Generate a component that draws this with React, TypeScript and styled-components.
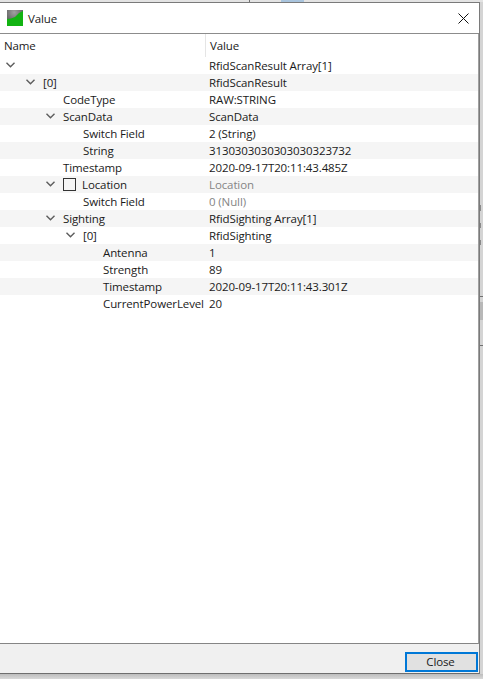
import React from 'react';
import styled, { createGlobalStyle } from 'styled-components';

const GlobalStyle = createGlobalStyle`
  html, body {
    margin: 0;
    padding: 0;
    overflow: hidden;
    background: #dcdcdc;
  }
`;

const Page = styled.div`
  width: 483px;
  height: 679px;
  display: grid;
  grid-template-columns: 480px 3px;
  grid-template-rows: 2px 672px 5px;
  font-family: 'Open Sans', 'Liberation Sans', sans-serif;
  font-size: 11.5px;
  letter-spacing: -0.11px;
  color: #1a1a1a;
  overflow: hidden;
`;

const TopStrip = styled.div`
  grid-column: 1 / 3;
  display: flex;
  background: #e3e3e3;
`;

const StripLine = styled.div`
  width: 1px;
  margin-left: 249px;
  background: #707070;
`;

const StripTab = styled.div`
  width: 23px;
  margin-left: 31px;
  background: #a9c4dd;
`;

const SideStrip = styled.div`
  background:
    linear-gradient(
        to bottom,
        transparent 203px,
        #8a8a8a 203px,
        #8a8a8a 209px,
        transparent 209px,
        transparent 221px,
        #8a8a8a 221px,
        #8a8a8a 226px,
        transparent 226px,
        transparent 238px,
        #8a8a8a 238px,
        #8a8a8a 243px,
        transparent 243px
      )
      left top / 1px 100% no-repeat,
    linear-gradient(
      to bottom,
      #d4d4d4 294px,
      #707070 294px,
      #707070 295px,
      #d4d4d4 295px,
      #d4d4d4 300px,
      #b8b8b8 300px,
      #b8b8b8 318px,
      #d4d4d4 318px,
      #d4d4d4 343px,
      #707070 343px,
      #707070 344px,
      #d4d4d4 344px
    );
`;

const BottomStrip = styled.div`
  grid-column: 1 / 3;
  background: linear-gradient(to bottom, #bdbdbd, #d8d8d8);
`;

const Window = styled.div`
  display: flex;
  flex-direction: column;
  min-height: 0;
  background: #fff;
  border-top: 1px solid #7a7a7a;
  border-right: 1px solid #7a7a7a;
  border-bottom: 1px solid #6e6e6e;
`;

const TitleBar = styled.div`
  height: 30px;
  flex: none;
  display: flex;
  align-items: center;
  padding: 0 10px 0 7px;
  border-bottom: 1px solid #8c8c8c;
`;

const TitleText = styled.span`
  flex: 1;
  margin-left: 5px;
`;

const CloseGlyph = styled.svg`
  width: 11px;
  height: 11px;
  display: block;
`;

const ListPane = styled.div`
  flex: 1;
  min-height: 0;
  border-right: 1px solid #a0a0a0;
  border-bottom: 1px solid #858585;
`;

const HeaderRow = styled.div`
  height: 23px;
  display: grid;
  grid-template-columns: 205px 1fr;
  align-items: center;
`;

const HeaderCell = styled.div<{ $divided?: boolean }>`
  height: 100%;
  display: flex;
  align-items: center;
  padding-left: 4px;
  box-sizing: border-box;
  border-left: ${(p) => (p.$divided ? '1px solid #e5e5e5' : 'none')};
`;

const Row = styled.div`
  height: 17px;
  display: grid;
  grid-template-columns: 209px 1fr;
  align-items: center;
  white-space: nowrap;

  &:nth-child(even) {
    background: #f5f5f5;
  }
`;

const NameCell = styled.div<{ $depth: number }>`
  display: flex;
  align-items: center;
  padding-left: ${(p) => p.$depth * 20 + 3}px;
`;

const Twisty = styled.span`
  width: 14px;
  margin-right: 6px;
  flex: none;
  display: flex;
  justify-content: center;
`;

const Chevron = styled.svg`
  width: 9px;
  height: 6px;
  display: block;
  margin-top: -2px;
`;

const CheckBox = styled.span`
  width: 11px;
  height: 11px;
  margin-right: 6px;
  border: 1px solid #333;
  flex: none;
`;

const ValueCell = styled.div<{ $muted?: boolean }>`
  color: ${(p) => (p.$muted ? '#858585' : 'inherit')};
`;

const Footer = styled.div`
  height: 29px;
  flex: none;
  display: flex;
  justify-content: flex-end;
  align-items: flex-end;
  padding: 0 1px 1px 0;
  box-sizing: border-box;
  background: #f0f0f0;
`;

const CloseButton = styled.button`
  width: 73px;
  height: 20px;
  padding: 0 2px 2px 0;
  border: 2px solid #0078d7;
  background: #e1e1e1;
  font: inherit;
  letter-spacing: inherit;
  color: inherit;
`;

type Item = {
  depth: number;
  name: string;
  value: string;
  open?: boolean;
  check?: boolean;
  muted?: boolean;
};

const items: Item[] = [
  { depth: 0, name: '', value: 'RfidScanResult Array[1]', open: true },
  { depth: 1, name: '[0]', value: 'RfidScanResult', open: true },
  { depth: 2, name: 'CodeType', value: 'RAW:STRING' },
  { depth: 2, name: 'ScanData', value: 'ScanData', open: true },
  { depth: 3, name: 'Switch Field', value: '2 (String)' },
  { depth: 3, name: 'String', value: '3130303030303030323732' },
  { depth: 2, name: 'Timestamp', value: '2020-09-17T20:11:43.485Z' },
  { depth: 2, name: 'Location', value: 'Location', open: true, check: true, muted: true },
  { depth: 3, name: 'Switch Field', value: '0 (Null)', muted: true },
  { depth: 2, name: 'Sighting', value: 'RfidSighting Array[1]', open: true },
  { depth: 3, name: '[0]', value: 'RfidSighting', open: true },
  { depth: 4, name: 'Antenna', value: '1' },
  { depth: 4, name: 'Strength', value: '89' },
  { depth: 4, name: 'Timestamp', value: '2020-09-17T20:11:43.301Z' },
  { depth: 4, name: 'CurrentPowerLevel', value: '20' },
];

const AppIcon = () => (
  <svg width="16" height="16" viewBox="0 0 16 16" style={{ display: 'block', flex: 'none' }}>
    <defs>
      <radialGradient id="iconGrey" cx="0.45" cy="0.15" r="0.8">
        <stop offset="0" stopColor="#a0a0a0" />
        <stop offset="1" stopColor="#4c4c4c" />
      </radialGradient>
    </defs>
    <rect width="16" height="16" fill="url(#iconGrey)" />
    <path d="M0 9 L4 8.5 L8 7 L12 3 L16 1 V16 H0 Z" fill="#12b312" />
  </svg>
);

const App: React.FC = () => (
  <Page>
    <GlobalStyle />
    <TopStrip>
      <StripLine />
      <StripTab />
    </TopStrip>
    <Window>
      <TitleBar>
        <AppIcon />
        <TitleText>Value</TitleText>
        <CloseGlyph viewBox="0 0 11 11">
          <path d="M0.5 0.5 L10.5 10.5 M10.5 0.5 L0.5 10.5" stroke="#111" strokeWidth="1" fill="none" />
        </CloseGlyph>
      </TitleBar>
      <ListPane>
        <HeaderRow>
          <HeaderCell>Name</HeaderCell>
          <HeaderCell $divided>Value</HeaderCell>
        </HeaderRow>
        <div>
          {items.map((item, i) => (
            <Row key={i}>
              <NameCell $depth={item.depth}>
                <Twisty>
                  {item.open && (
                    <Chevron viewBox="0 0 9 6">
                      <path d="M0.5 0.8 L4.5 4.8 L8.5 0.8" stroke="#5c5c5c" strokeWidth="1.4" fill="none" />
                    </Chevron>
                  )}
                </Twisty>
                {item.check && <CheckBox />}
                {item.name}
              </NameCell>
              <ValueCell $muted={item.muted}>{item.value}</ValueCell>
            </Row>
          ))}
        </div>
      </ListPane>
      <Footer>
        <CloseButton>Close</CloseButton>
      </Footer>
    </Window>
    <SideStrip />
    <BottomStrip />
  </Page>
);

export default App;
